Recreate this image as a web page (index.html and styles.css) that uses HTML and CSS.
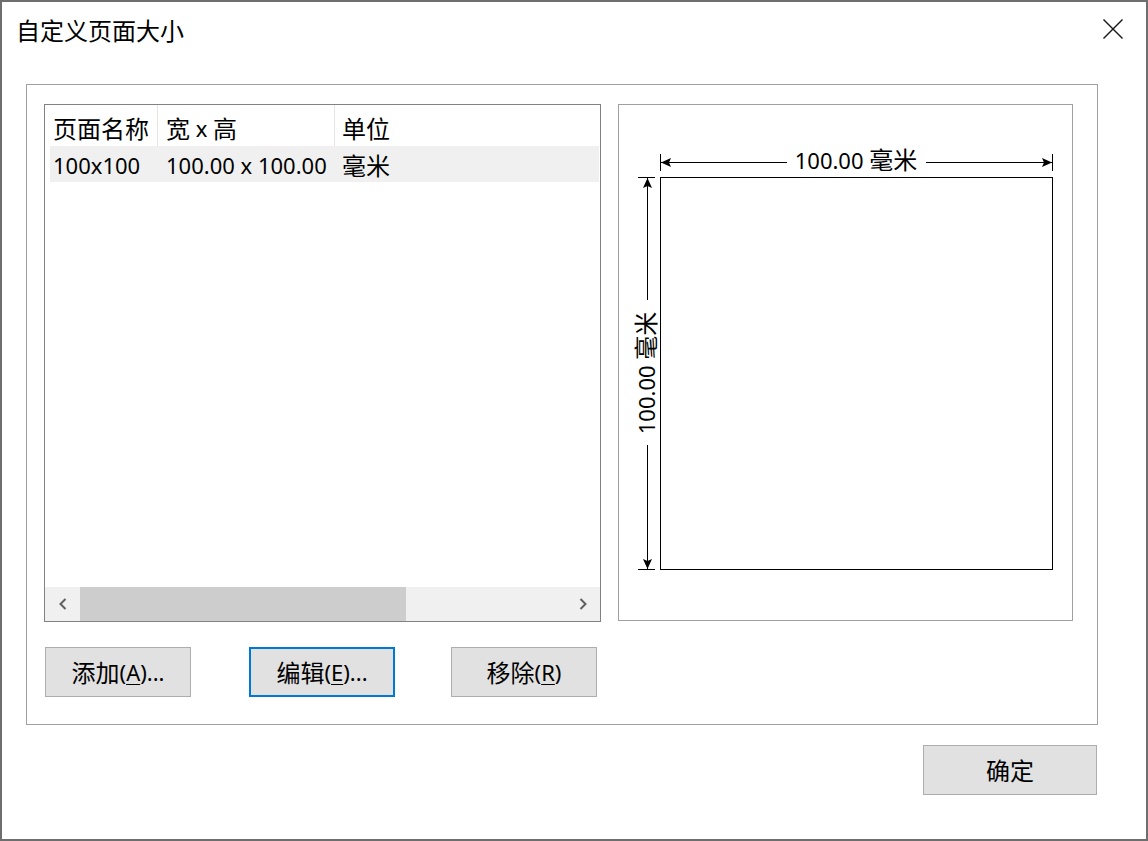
FILE: index.html
```html
<!DOCTYPE html>
<html lang="zh-CN">
<head>
<meta charset="utf-8">
<title>自定义页面大小</title>
<link rel="stylesheet" href="styles.css">
</head>
<body>
<div class="window">
  <div class="titlebar">
    <div class="title"><span class="c">自定义页面大小</span></div>
    <svg class="close" width="20" height="20" viewBox="0 0 20 20">
      <line x1="0.5" y1="0.5" x2="19.5" y2="19.5" />
      <line x1="19.5" y1="0.5" x2="0.5" y2="19.5" />
    </svg>
  </div>

  <div class="group">
    <div class="panels">
      <div class="list">
        <div class="header">
          <div class="col col1"><span class="c">页面名称</span></div>
          <div class="col col2"><span class="c">宽</span>&nbsp;x&nbsp;<span class="c">高</span></div>
          <div class="col col3"><span class="c">单位</span></div>
        </div>
        <div class="row">
          <div class="col col1">100x100</div>
          <div class="col col2">100.00 x 100.00</div>
          <div class="col col3"><span class="c">毫米</span></div>
        </div>
        <div class="list-body"></div>
        <div class="hscroll">
          <div class="arrow-btn">
            <svg width="8" height="12" viewBox="0 0 8 12"><polyline points="6.5,1 1.5,6 6.5,11" /></svg>
          </div>
          <div class="track">
            <div class="thumb"></div>
          </div>
          <div class="arrow-btn">
            <svg width="8" height="12" viewBox="0 0 8 12"><polyline points="1.5,1 6.5,6 1.5,11" /></svg>
          </div>
        </div>
      </div>

      <div class="preview">
        <svg class="diagram" width="453" height="515" viewBox="0 0 453 515">
          <rect class="page" x="41.5" y="72.5" width="392" height="392" />
          <!-- horizontal dimension -->
          <line class="dim" x1="41.5" y1="49" x2="41.5" y2="66" />
          <line class="dim" x1="433.5" y1="49" x2="433.5" y2="66" />
          <line class="dim" x1="42" y1="57.5" x2="168" y2="57.5" />
          <line class="dim" x1="307" y1="57.5" x2="433" y2="57.5" />
          <path class="head" d="M42 57.5 L52 53 L50 57.5 L52 62 Z" />
          <path class="head" d="M433 57.5 L423 53 L425 57.5 L423 62 Z" />
          <text class="dimtext" x="237" y="64" text-anchor="middle">100.00 <tspan class="dimc">毫米</tspan></text>
          <!-- vertical dimension -->
          <line class="dim" x1="19" y1="72.5" x2="36" y2="72.5" />
          <line class="dim" x1="19" y1="464.5" x2="36" y2="464.5" />
          <line class="dim" x1="28.5" y1="73" x2="28.5" y2="195" />
          <line class="dim" x1="28.5" y1="340" x2="28.5" y2="464" />
          <path class="head" d="M28.5 73 L24 83 L28.5 81 L33 83 Z" />
          <path class="head" d="M28.5 464 L24 454 L28.5 456 L33 454 Z" />
          <text class="dimtext" transform="translate(28.5 268) rotate(-90)" x="0" y="7" text-anchor="middle">100.00 <tspan class="dimc">毫米</tspan></text>
        </svg>
      </div>
    </div>

    <div class="buttons">
      <button class="btn"><span class="c">添加</span>(<u>A</u>)...</button>
      <button class="btn focused"><span class="c">编辑</span>(<u>E</u>)...</button>
      <button class="btn last"><span class="c">移除</span>(<u>R</u>)</button>
    </div>
  </div>

  <div class="footer">
    <button class="btn ok"><span class="c">确定</span></button>
  </div>
</div>
</body>
</html>
```

FILE: styles.css
```css
html, body {
  margin: 0;
  padding: 0;
  background: #ffffff;
}

body {
  font-family: "Noto Sans", "Noto Sans CJK SC", sans-serif;
  font-size: 22px;
  color: #000000;
  line-height: 30px;
}

.c {
  font-family: "Noto Sans CJK SC", "Noto Sans", sans-serif;
  font-size: 24px;
  line-height: 30px;
}

.window {
  box-sizing: border-box;
  width: 1148px;
  height: 841px;
  border: 2px solid #6e6e6e;
  display: flex;
  flex-direction: column;
  overflow: hidden;
}

/* Title bar */
.titlebar {
  height: 56px;
  flex: none;
  display: flex;
  align-items: center;
  justify-content: space-between;
  padding: 0 23px 0 14px;
}

.title {
  display: flex;
  align-items: center;
  height: 30px;
}

.close {
  display: block;
  margin-top: -2px;
}

.close line {
  stroke: #1a1a1a;
  stroke-width: 1.4;
}

/* Group box */
.group {
  box-sizing: border-box;
  flex: none;
  width: 1072px;
  height: 641px;
  margin: 26px 0 0 24px;
  border: 1px solid #a0a0a0;
  padding: 19px 0 0 17px;
  display: flex;
  flex-direction: column;
}

.panels {
  display: flex;
  gap: 17px;
  align-items: flex-start;
}

/* List view */
.list {
  box-sizing: border-box;
  width: 557px;
  height: 518px;
  border: 1px solid #828282;
  display: flex;
  flex-direction: column;
  background: #ffffff;
}

.header,
.row {
  display: flex;
  margin: 0 1px 0 5px;
  flex: none;
}

.header {
  height: 41px;
}

.row {
  height: 36px;
  background: #f0f0f0;
}

.col {
  box-sizing: border-box;
  display: flex;
  align-items: center;
  white-space: nowrap;
}

.header .col {
  padding-top: 4px;
}

.row .col {
  padding-top: 1px;
}

.col1 {
  width: 108px;
  padding-left: 3px;
}

.col2 {
  width: 177px;
  padding-left: 8px;
}

.col3 {
  flex: 1;
  padding-left: 7px;
}

.header .col1,
.header .col2 {
  border-right: 1px solid #e5e5e5;
}

.list-body {
  flex: 1;
}

.hscroll {
  flex: none;
  height: 34px;
  display: flex;
  background: #f0f0f0;
}

.arrow-btn {
  width: 35px;
  display: flex;
  align-items: center;
  justify-content: center;
  flex: none;
}

.arrow-btn polyline {
  fill: none;
  stroke: #606060;
  stroke-width: 2;
}

.track {
  flex: 1;
  display: flex;
}

.thumb {
  width: 326px;
  background: #cdcdcd;
}

/* Preview */
.preview {
  box-sizing: border-box;
  width: 455px;
  height: 517px;
  border: 1px solid #a0a0a0;
}

.diagram {
  display: block;
}

.page {
  fill: #ffffff;
  stroke: #000000;
  stroke-width: 1;
}

.dim {
  stroke: #000000;
  stroke-width: 1;
}

.head {
  fill: #000000;
}

.dimtext {
  font-family: "Noto Sans", "Noto Sans CJK SC", sans-serif;
  font-size: 22px;
  font-weight: 400;
  fill: #000000;
}

.dimc {
  font-family: "Noto Sans CJK SC", sans-serif;
  font-size: 24px;
  font-weight: 400;
}

/* Buttons */
.buttons {
  display: flex;
  gap: 58px;
  margin-top: 25px;
  padding-left: 1px;
}

.btn {
  box-sizing: border-box;
  width: 146px;
  height: 50px;
  background: #e1e1e1;
  border: 1px solid #adadad;
  border-radius: 0;
  padding: 0;
  margin: 0;
  font-family: "Noto Sans", "Noto Sans CJK SC", sans-serif;
  font-size: 22px;
  line-height: 30px;
  color: #000000;
  display: flex;
  align-items: center;
  justify-content: center;
}

.btn.last {
  margin-left: -2px;
}

.btn u {
  text-decoration-thickness: 1px;
  text-underline-offset: 3px;
}

.btn.focused {
  border: 2px solid #0078d7;
}

.footer {
  display: flex;
  justify-content: flex-end;
  padding-right: 49px;
  margin-top: 20px;
}

.btn.ok {
  width: 174px;
}
```
